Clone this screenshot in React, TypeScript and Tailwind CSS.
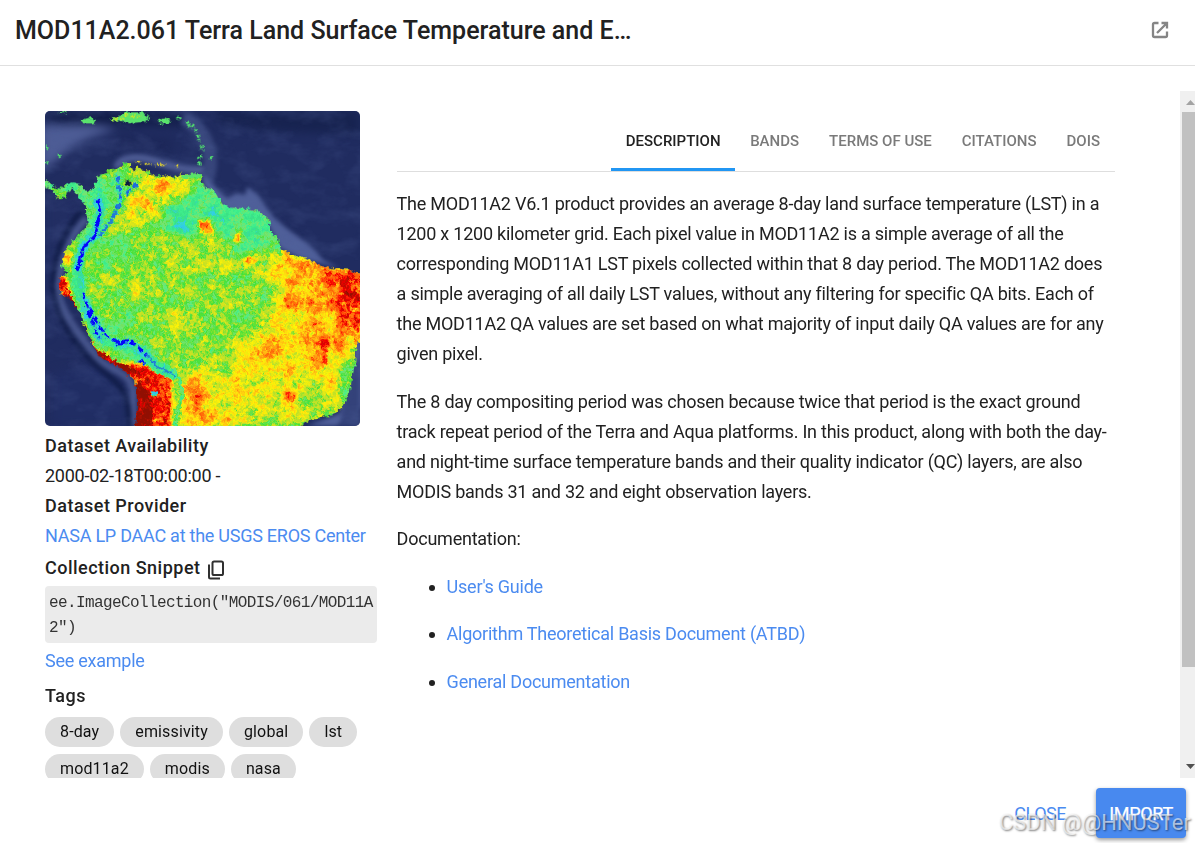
import React from 'react';

const TABS = ['DESCRIPTION', 'BANDS', 'TERMS OF USE', 'CITATIONS', 'DOIS'];

const TAGS = ['8-day', 'emissivity', 'global', 'lst', 'mod11a2', 'modis', 'nasa'];

const DOCS = ["User's Guide", 'Algorithm Theoretical Basis Document (ATBD)', 'General Documentation'];

// Cold to hot land surface temperature ramp, one table per channel
const RAMP_R = '.02 .08 .14 .15 .19 .2 .23 .25 .5 .23 .71 .84 1 1 1 1 1 1 1 .87 .76 .65 .57';
const RAMP_G = '.01 .25 .45 .6 .78 .83 .88 .95 .89 .89 .89 .89 .97 .84 .71 .55 .43 .31 0 0 .07 .06 .06';
const RAMP_B = '1 .9 .85 .75 .89 .9 .52 .56 .43 .22 .18 .12 .02 .07 .07 .07 .03 .05 0 0 0 0 .01';

const LAND =
    'M15 222 L32 238 L52 252 L76 240 L98 232 L124 238 L140 262 L152 258 L164 240 L176 212 L208 196 L236 192 L252 174 L270 172 L272 190 L284 196 L290 184 L304 194 L326 198 L334 210 L370 212 L400 218 L430 208 L486 204 L484 230 L494 246 L524 258 L540 288 L566 308 L620 310 L650 316 L688 342 L694 380 L714 400 L722 432 L760 450 L800 458 L838 482 L880 490 L920 494 L970 510 L970 712 L950 712 L946 770 L936 820 L930 860 L905 908 L880 930 L845 936 L800 948 L780 970 L284 970 L292 900 L286 826 L252 796 L210 772 L178 754 L160 720 L140 680 L118 620 L92 580 L62 566 L58 522 L82 506 L64 480 L76 440 L96 408 L124 382 L144 360 L136 300 L118 276 L98 252 L80 266 L78 280 L48 278 L44 260 L15 242 Z';

const ExternalIcon = () => (
    <svg className="mb-0.5 h-5 w-5 fill-none stroke-[#858585]" viewBox="0 0 20 20" strokeWidth="2.3">
        <path d="M8.5 3H4.5Q3 3 3 4.5V15.5Q3 17 4.5 17H15.5Q17 17 17 15.5V11.5M11.5 3H17V8.5M16.5 3.5L7 13" />
    </svg>
);

const CopyIcon = () => (
    <svg className="mt-[3px] h-5 w-5 fill-none stroke-[#303030]" viewBox="0 0 20 20" strokeWidth="2">
        <rect x="5.5" y="1.5" width="10.5" height="13.5" rx="1.6" />
        <path d="M2 4.500v12.400c0 .9.6 1.500 1.500 1.500h9.500" />
    </svg>
);

const TemperatureMap = () => (
    <svg className="block h-[315px] w-[315px] rounded-[5px]" viewBox="15 18 945 945">
        <defs>
            <filter id="heat" x="0" y="0" width="975" height="980" filterUnits="userSpaceOnUse" colorInterpolationFilters="sRGB">
                <feTurbulence type="fractalNoise" baseFrequency=".026" numOctaves="3" seed="8" />
                <feColorMatrix values="1 0 0 0 0 1 0 0 0 0 1 0 0 0 0 0 0 0 0 1" result="broad" />
                <feTurbulence type="fractalNoise" baseFrequency=".1" numOctaves="2" seed="21" />
                <feColorMatrix values="1 0 0 0 0 1 0 0 0 0 1 0 0 0 0 0 0 0 0 1" result="fine" />
                <feComposite in="broad" in2="fine" operator="arithmetic" k2=".5" k3=".5" result="noise" />
                <feComposite in="SourceGraphic" in2="noise" operator="arithmetic" k1="1" k2=".5" k3=".1" k4="-.05" />
                <feComponentTransfer>
                    <feFuncR type="table" tableValues={RAMP_R} />
                    <feFuncG type="table" tableValues={RAMP_G} />
                    <feFuncB type="table" tableValues={RAMP_B} />
                </feComponentTransfer>
            </filter>
            <filter id="coast" x="0" y="0" width="975" height="980" filterUnits="userSpaceOnUse" colorInterpolationFilters="sRGB">
                <feTurbulence type="fractalNoise" baseFrequency=".09" numOctaves="2" seed="3" result="n" />
                <feDisplacementMap in="SourceGraphic" in2="n" scale="18" xChannelSelector="R" yChannelSelector="G" />
            </filter>
            <filter id="sea" x="0" y="0" width="975" height="980" filterUnits="userSpaceOnUse" colorInterpolationFilters="sRGB">
                <feTurbulence type="fractalNoise" baseFrequency=".012 .02" numOctaves="4" seed="5" />
                <feColorMatrix values="0 0 0 0 .33 0 0 0 0 .4 0 0 0 0 .62 1.8 0 0 0 -.75" />
            </filter>
            <filter id="soft16" x="-50%" y="-50%" width="200%" height="200%" colorInterpolationFilters="sRGB"><feGaussianBlur stdDeviation="14" /></filter>
            <filter id="soft6" x="-50%" y="-50%" width="200%" height="200%" colorInterpolationFilters="sRGB"><feGaussianBlur stdDeviation="6" /></filter>
            <filter id="soft2" x="-50%" y="-50%" width="200%" height="200%" colorInterpolationFilters="sRGB"><feGaussianBlur stdDeviation="1.5" /></filter>
            <clipPath id="land"><path d={LAND} /></clipPath>
        </defs>

        {/* ocean floor */}
        <rect x="15" y="18" width="945" height="945" fill="#202c60" />
        <g filter="url(#soft16)">
            <path d="M15 18H230L440 40L430 60L100 56L15 45Z" fill="#101b45" />
            <path d="M500 18H960V90L720 80L560 60Z" fill="#172350" />
            <path d="M0 60L150 56L230 70L150 100L90 130L60 160L0 200Z" fill="#4d5c95" />
            <path d="M230 90L400 100L390 150L230 130Z" fill="#1c2759" />
            <path d="M15 270L100 290L110 340L60 480L40 640L15 700Z" fill="#222e63" />
            <path d="M40 800L200 780L270 860V963H40Z" fill="#202d64" />
        </g>
        <g fill="none" filter="url(#soft6)">
            <path d="M230 190C240 155 290 150 350 170S440 195 500 195" stroke="#4c5a92" strokeWidth="24" />
            <path d="M430 40C520 80 520 180 500 230" stroke="#37457b" strokeWidth="40" />
            <path d="M140 340C80 400 66 480 52 540C52 620 130 700 165 750S270 790 280 860V963" stroke="#46548b" strokeWidth="22" />
            <path d="M120 320C60 400 45 450 38 540C45 640 110 730 180 790S268 860 268 963" stroke="#101c47" strokeWidth="15" />
        </g>
        <g fill="#4f5f99" filter="url(#soft6)">
            <path d="M490 205L525 245L560 280L590 265L615 270L622 245L655 270L675 300L700 335L740 370L780 400L820 430L850 465L900 490L780 460L720 430L680 350L560 320L490 240Z" />
            <path d="M945 700H965V900L930 940L890 963H800L900 925L930 850Z" />
        </g>
        <path d="M920 800L960 760V963H900Z" fill="#34427a" filter="url(#soft6)" />
        <rect x="15" y="18" width="945" height="945" filter="url(#sea)" opacity=".3" />

        <g filter="url(#coast)">
            <g clipPath="url(#land)">
                <g filter="url(#heat)">
                    <rect x="0" y="0" width="975" height="980" fill="#6d6d6d" />
                    <g filter="url(#soft16)">
                        {/* cool north and Andean foothills */}
                        <path d="M0 200L150 230L260 200L230 340L140 440L130 540L180 660L330 750L400 800L420 963L390 963L390 820L170 720L80 540L120 380L110 260L0 270Z" fill="#565656" />
                        <path d="M450 230L540 260L700 320L710 400L660 450L590 430L530 380L400 400L370 330Z" fill="#505050" />
                        <path d="M180 400H310L300 460L180 500Z" fill="#606060" />
                        <path d="M190 610L280 620L290 700L200 670Z" fill="#5c5c5c" />
                        {/* warm plains */}
                        <path d="M255 185L330 200L460 225L440 280L360 300L350 340L230 375L215 340L290 250Z" fill="#868686" />
                        <path d="M350 225H400L390 255H350Z" fill="#a8a8a8" />
                        <path d="M140 500L300 500L400 540L330 580L150 550Z" fill="#757575" />
                        <path d="M350 410L540 400L600 460L540 530L370 510Z" fill="#757575" />
                        <path d="M720 440L970 460V720L930 880L850 930L420 970L420 820L520 760L640 700L710 600L700 520L600 490Z" fill="#8c8c8c" />
                        <path d="M430 800L500 830L520 963H430Z" fill="#a2a2a2" />
                        <path d="M750 470L970 490V700L870 760L790 790L800 640L720 640L740 560Z" fill="#a4a4a4" />
                        <path d="M660 690L740 690L720 760L660 750Z" fill="#a8a8a8" />
                        <path d="M870 495L980 490V690L900 660Z" fill="#c4c4c4" />
                        <path d="M770 860L850 830L850 920H780Z" fill="#6c6c6c" />
                        <path d="M500 770L600 750L560 840L510 830Z" fill="#787878" />
                        <path d="M600 890L700 870L720 940L600 950Z" fill="#7c7c7c" />
                        <path d="M955 700L940 850L900 920L905 800Z" fill="#5c5c5c" />
                        <path d="M390 600L470 610L450 680L390 670Z" fill="#808080" />
                    </g>
                    <g filter="url(#soft6)">
                        <path d="M478 345L510 342L524 382L505 388L480 370Z" fill="#b4b4b4" />
                        <path d="M586 385H600V412H586Z" fill="#c8c8c8" />
                        <path d="M610 460H650V475H610Z" fill="#b0b0b0" />
                        <path d="M725 440L750 440L740 468Z" fill="#c8c8c8" />
                        <path d="M300 285H345V305H310Z" fill="#a0a0a0" />
                        <path d="M385 300L420 320L440 380L410 375Z" fill="#404040" />
                        <path d="M50 515L75 515L95 575L60 570Z" fill="#dcdcdc" />
                        <path d="M68 450L95 450L90 482L70 480Z" fill="#a0a0a0" />
                        <path d="M845 690L870 710L860 780L842 775Z" fill="#d2d2d2" />
                        <path d="M905 520L965 560V620L915 600Z" fill="#dedede" />
                        <path d="M835 495L880 500L870 540L840 520Z" fill="#bdbdbd" />
                        <path d="M265 770L395 800L395 970H280V830Z" fill="#d4d4d4" />
                        <path d="M735 860L768 870L755 895L735 885Z" fill="#b5b5b5" />
                        <path d="M445 840L480 860L465 930Z" fill="#b8b8b8" />
                    </g>
                    <g fill="none" filter="url(#soft2)">
                        <path d="M66 540C110 600 110 660 160 733S240 775 290 815" stroke="#dedede" strokeWidth="16" />
                        <path d="M170 738C220 780 280 790 330 835" stroke="#f6f6f6" strokeWidth="14" />
                        <path d="M300 830L338 890L335 970H285V840Z" fill="#fff" />
                        <path d="M112 490L118 560L140 610L165 675L190 700L238 722L300 735L350 785L410 812" stroke="#484848" strokeWidth="32" />
                        <path d="M172 282L182 318L164 392L128 430L112 494" stroke="#404040" strokeWidth="26" />
                        <path d="M172 282L182 318L164 392L128 430L112 494" stroke="#000" strokeWidth="11" strokeDasharray="40 4" />
                        <path d="M128 560L138 592L150 635L178 700M150 610L170 650L195 690L238 712L270 704L320 750M230 716H252M300 765L316 778" stroke="#000" strokeWidth="10" strokeDasharray="22 7" />
                        <path d="M320 750L350 785L408 812" stroke="#1c1c1c" strokeWidth="8" />
                        <path d="M234 212L242 292L212 350L180 390M296 236L252 268" stroke="#181818" strokeWidth="11" strokeDasharray="22 5" />
                        <path d="M415 815L428 870L402 963" stroke="#585858" strokeWidth="12" />
                        <path d="M335 866H354" stroke="#303030" strokeWidth="14" />
                    </g>
                </g>
            </g>
            {/* Caribbean islands */}
            <g fill="#5ae36c">
                <path d="M58 19H76V24H58ZM122 45L145 38L168 45L160 55H130ZM206 42L235 36L248 22H310L330 38L318 50L270 54L230 48ZM352 44L374 38L396 46L385 55H360Z" />
                <path d="M422 212L486 204L480 218L430 222Z" />
            </g>
            <path d="M250 30L300 36M220 42H250" fill="none" stroke="#c3e62a" strokeWidth="7" strokeDasharray="14 8" />
            <path d="M412 40H426M440 48L450 66M456 58L470 84M476 90V108M484 120V136M482 152V160M480 172V182M512 154V162M20 124V134M56 152H62M20 172V178" fill="none" stroke="#52e070" strokeWidth="9" strokeDasharray="9 5" />
            <path d="M292 172H304M318 178H334M348 180H378M406 184H414M416 208H426" fill="none" stroke="#e7d62a" strokeWidth="7" strokeDasharray="8 6" />
            <path d="M256 222L270 226L272 242L258 238Z" fill="#0d1a44" />
        </g>
    </svg>
);

const Heading: React.FC<{ children: React.ReactNode }> = ({ children }) => (
    <h3 className="flex h-[30px] items-center gap-[7px] text-[18px] font-medium tracking-[0.48px]">{children}</h3>
);

const Sidebar = () => (
    <aside className="w-[332px] shrink-0 pt-5">
        <TemperatureMap />
        <div className="pt-[5px]">
            <Heading>Dataset Availability</Heading>
            <p>2000-02-18T00:00:00 -</p>
            <Heading>Dataset Provider</Heading>
            <a className="block whitespace-nowrap text-[#4b8bf0]">NASA LP DAAC at the USGS EROS Center</a>
        </div>
        <div className="pt-0.5">
            <Heading>
                Collection Snippet <CopyIcon />
            </Heading>
        </div>
        <pre className="mt-[3px] h-[57px] rounded-[4px] bg-[#ebebeb] pt-[5px] pl-1 font-['Liberation_Mono',monospace] text-[16px] leading-[25px] tracking-[-0.61px] break-all whitespace-pre-wrap text-[#333]">
            ee.ImageCollection("MODIS/061/MOD11A2")
        </pre>
        <a className="mt-[3px] block text-[#4b8bf0]">See example</a>
        <div className="pt-[5px]">
            <Heading>Tags</Heading>
        </div>
        <div className="mt-1.5 flex flex-wrap gap-x-1.5 gap-y-[7px]">
            {TAGS.map(tag => (
                <span key={tag} className="h-[30px] rounded-full bg-[#dedede] px-[15px] text-[16px] leading-[30px] tracking-[0.14px] text-[#111]">
                    {tag}
                </span>
            ))}
        </div>
    </aside>
);

const Description = () => (
    <section className="ml-5 w-[718px] shrink-0 pt-5">
        <nav className="flex h-[61px] justify-end border-b border-[#dedede] tracking-normal">
            {TABS.map((tab, i) => (
                <button
                    key={tab}
                    className={
                        i === 0
                            ? 'h-[60px] w-[124px] border-b-[3px] border-[#2196f3] pt-[3px] text-[15px] font-medium text-[#212121]'
                            : 'h-[60px] border-b-[3px] border-transparent px-[15px] pt-[3px] text-[15px] font-medium text-[#7a7a7a]'
                    }
                >
                    {tab}
                </button>
            ))}
        </nav>
        <div className="-ml-[0.4px] pt-[17px] tracking-[-0.235px] whitespace-nowrap">
            <p>
                The MOD11A2 V6.1 product provides an average 8-day land surface temperature (LST) in a<br />
                1200 x 1200 kilometer grid. Each pixel value in MOD11A2 is a simple average of all the<br />
                corresponding MOD11A1 LST pixels collected within that 8 day period. The MOD11A2 does<br />
                a simple averaging of all daily LST values, without any filtering for specific QA bits. Each of<br />
                the MOD11A2 QA values are set based on what majority of input daily QA values are for any<br />
                given pixel.
            </p>
            <p className="mt-[18px]">
                The 8 day compositing period was chosen because twice that period is the exact ground<br />
                track repeat period of the Terra and Aqua platforms. In this product, along with both the day-<br />
                and night-time surface temperature bands and their quality indicator (QC) layers, are also<br />
                MODIS bands 31 and 32 and eight observation layers.
            </p>
            <p className="mt-[17px]">Documentation:</p>
            <ul className="mt-[18px] space-y-[17.4px] pl-[50px] tracking-[-0.245px]">
                {DOCS.map(doc => (
                    <li key={doc} className="list-disc">
                        <a className="text-[#4b8bf0]">{doc}</a>
                    </li>
                ))}
            </ul>
        </div>
    </section>
);

const Scrollbar = () => (
    <div className="ml-auto flex w-[15px] shrink-0 flex-col items-end bg-[#f0f0f0]">
        <svg className="h-[21px] w-[9px] fill-[#a3a3a3]" viewBox="0 0 9 21">
            <path d="M0 14L4.5 9L9 14Z" />
        </svg>
        <div className="h-[555px] w-[13px] bg-[#c1c1c1]" />
        <svg className="mt-auto h-[21px] w-[9px] fill-[#505050]" viewBox="0 0 9 21">
            <path d="M0 7H9L4.5 12Z" />
        </svg>
    </div>
);

const App = () => (
    <div className="relative flex h-[843px] w-[1195px] flex-col overflow-hidden bg-white font-['Roboto',sans-serif] text-[18px] leading-[30px] tracking-[-0.25px] text-[#212121]">
        <header className="flex h-[66px] shrink-0 items-center justify-between border-b border-[#e0e0e0] pr-[25px] pb-[3px] pl-[15px]">
            <h1 className="text-[25px] font-medium tracking-normal">MOD11A2.061 Terra Land Surface Temperature and E…</h1>
            <ExternalIcon />
        </header>
        <main className="mt-[25px] flex h-[687px] shrink-0 overflow-hidden pl-[45px]">
            <Sidebar />
            <Description />
            <Scrollbar />
        </main>
        <footer className="mt-2.5 flex h-[50px] shrink-0 items-stretch justify-end gap-[30px] pr-[9px]">
            <button className="pt-0.5 tracking-[-0.5px] text-[#4b8bf0]">CLOSE</button>
            <button className="w-[90px] rounded-[4px] bg-[#4889ef] pt-0.5 tracking-[-0.3px] text-white shadow-[0_2px_4px_rgba(0,0,0,0.4)] [-webkit-text-stroke:0.25px_white]">IMPORT</button>
        </footer>
        <span className="absolute top-[808px] left-[999px] text-[22px] tracking-[-0.05px] whitespace-nowrap text-white/60 [text-shadow:1px_1px_2px_rgba(0,0,0,0.5)]">
            CSDN @@HNUSTer
        </span>
    </div>
);

export default App;
